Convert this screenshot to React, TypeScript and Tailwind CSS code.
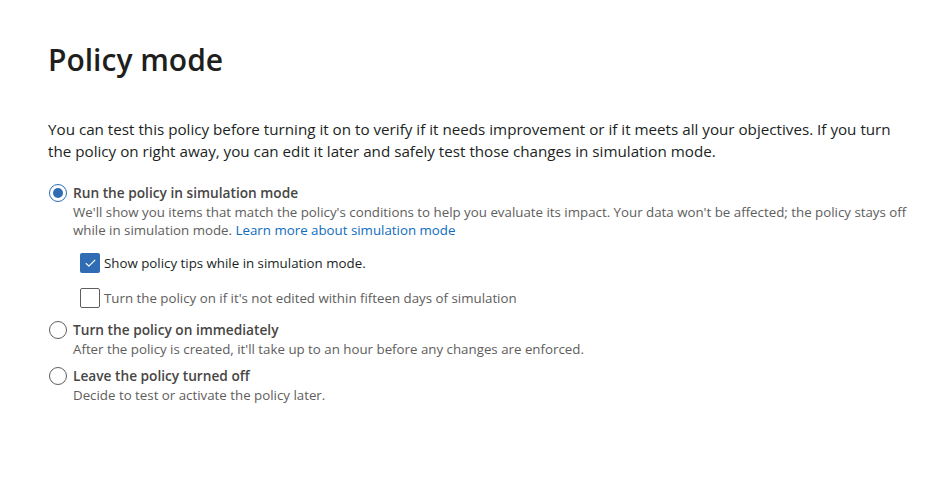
import { Check } from "lucide-react";

const font = { fontFamily: '"Segoe UI", "Open Sans", sans-serif' };

function Radio({ checked }: { checked?: boolean }) {
  return (
    <span
      className={`ml-[1px] mt-[1px] flex h-[18px] w-[18px] shrink-0 items-center justify-center rounded-full border ${
        checked ? "border-[#2f6cb3]" : "border-[#605e5c]"
      } bg-white`}
    >
      {checked && <span className="h-[10px] w-[10px] rounded-full bg-[#2f6cb3]" />}
    </span>
  );
}

function Checkbox({ checked }: { checked?: boolean }) {
  return checked ? (
    <span className="flex h-[20px] w-[20px] shrink-0 items-center justify-center rounded-[2px] bg-[#2f6cb3]">
      <Check className="h-[13px] w-[13px] text-white" strokeWidth={2} />
    </span>
  ) : (
    <span className="h-[20px] w-[20px] shrink-0 rounded-[2px] border border-[#605e5c] bg-white" />
  );
}

export default function App() {
  return (
    <div className="min-h-[480px] w-[952px] bg-white pl-[48px] pr-[50px] pt-[37px] text-[#201f1e]" style={font}>
      <h1 className="text-[30px] font-semibold leading-[46px]">Policy mode</h1>

      <p className="mt-[35px] text-[15.2px] leading-[22px]">
        You can test this policy before turning it on to verify if it needs improvement or if it meets all your
        objectives. If you turn the policy on right away, you can edit it later and safely test those changes in
        simulation mode.
      </p>

      <div className="mt-[21px] flex flex-col">
        <div className="flex gap-[6px]">
          <Radio checked />
          <div>
            <div className="text-[13.7px] font-semibold leading-[20px] text-[#484644]">
              Run the policy in simulation mode
            </div>
            <div className="mr-[-30px] text-[13.3px] leading-[18px] text-[#605e5c]">
              We'll show you items that match the policy's conditions to help you evaluate its impact. Your data
              won't be affected; the policy stays off while in simulation mode.{" "}
              <a className="text-[#0f6cbd]" href="#">
                Learn more about simulation mode
              </a>
            </div>
          </div>
        </div>

        <div className="ml-[32px] mt-[14px] flex items-center gap-[4px]">
          <Checkbox checked />
          <span className="text-[13.3px] leading-[20px] text-[#201f1e]">Show policy tips while in simulation mode.</span>
        </div>

        <div className="ml-[32px] mt-[15px] flex items-center gap-[4px]">
          <Checkbox />
          <span className="text-[13.3px] leading-[20px] text-[#605e5c]">
            Turn the policy on if it's not edited within fifteen days of simulation
          </span>
        </div>

        <div className="mt-[12px] flex gap-[6px]">
          <Radio />
          <div>
            <div className="text-[13.7px] font-semibold leading-[20px] text-[#484644]">
              Turn the policy on immediately
            </div>
            <div className="text-[13.3px] leading-[18px] text-[#605e5c]">
              After the policy is created, it'll take up to an hour before any changes are enforced.
            </div>
          </div>
        </div>

        <div className="mt-[8px] flex gap-[6px]">
          <Radio />
          <div>
            <div className="text-[13.7px] font-semibold leading-[20px] text-[#484644]">
              Leave the policy turned off
            </div>
            <div className="text-[13.3px] leading-[18px] text-[#605e5c]">
              Decide to test or activate the policy later.
            </div>
          </div>
        </div>
      </div>
    </div>
  );
}
